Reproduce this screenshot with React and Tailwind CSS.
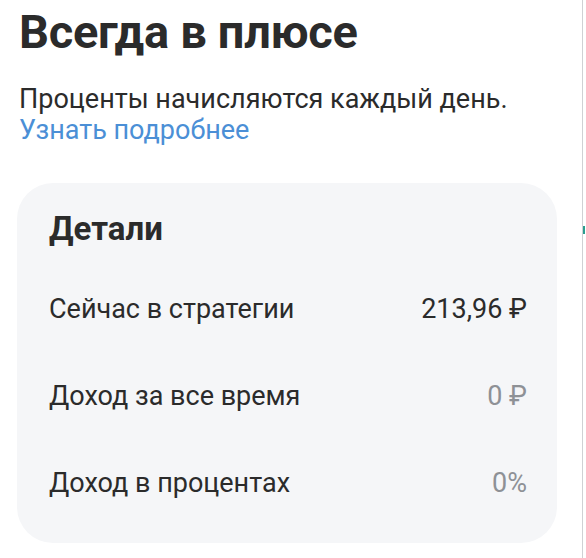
import React from 'react';

const ROWS = [
    { label: 'Сейчас в стратегии', value: '213,96 ₽', muted: false },
    { label: 'Доход за все время', value: '0 ₽', muted: true },
    { label: 'Доход в процентах', value: '0%', muted: true }
];

const App = () => {
    return (
        <div className="flex w-[586px] h-[558px] bg-white overflow-hidden" style={{ fontFamily: 'Roboto, "Noto Sans", sans-serif' }}>
            <div className="w-[583px] border-r border-[#cfd1d4] pl-[17px] pr-[25px] relative">
                {/* Title */}
                <h1 className="pl-[2px] pt-[3px] text-[47px] leading-[58px] font-bold text-[#2b2b2b] tracking-[-0.3px]">
                    Всегда в плюсе
                </h1>

                <p className="pl-[2px] mt-[23px] text-[27px] leading-[31px] text-[#2b2b2b]">
                    Проценты начисляются каждый день.
                </p>
                <a className="block pl-[2px] text-[27px] leading-[30px] text-[#4b8fd6]">Узнать подробнее</a>

                {/* Details card */}
                <div className="mt-[38px] h-[360px] rounded-[36px] bg-[#f5f6f8] pl-[32px] pr-[30px] pt-[26px]">
                    <h2 className="text-[33px] leading-[40px] font-bold text-[#2b2b2b]">Детали</h2>
                    <div className="mt-[39px] flex flex-col">
                        {ROWS.map((row) => (
                            <div key={row.label} className="h-[87px] flex items-start justify-between pt-[6px]">
                                <span className="text-[27px] leading-[30px] text-[#2b2b2b]">{row.label}</span>
                                <span className={`text-[27px] leading-[30px] ${row.muted ? 'text-[#8e9196]' : 'text-[#2b2b2b]'}`}>
                                    {row.value}
                                </span>
                            </div>
                        ))}
                    </div>
                </div>
                <div className="absolute right-[-3px] top-[226px] w-[2px] h-[8px] bg-[#2a9d8f]" />
            </div>
        </div>
    );
};

export default App;
